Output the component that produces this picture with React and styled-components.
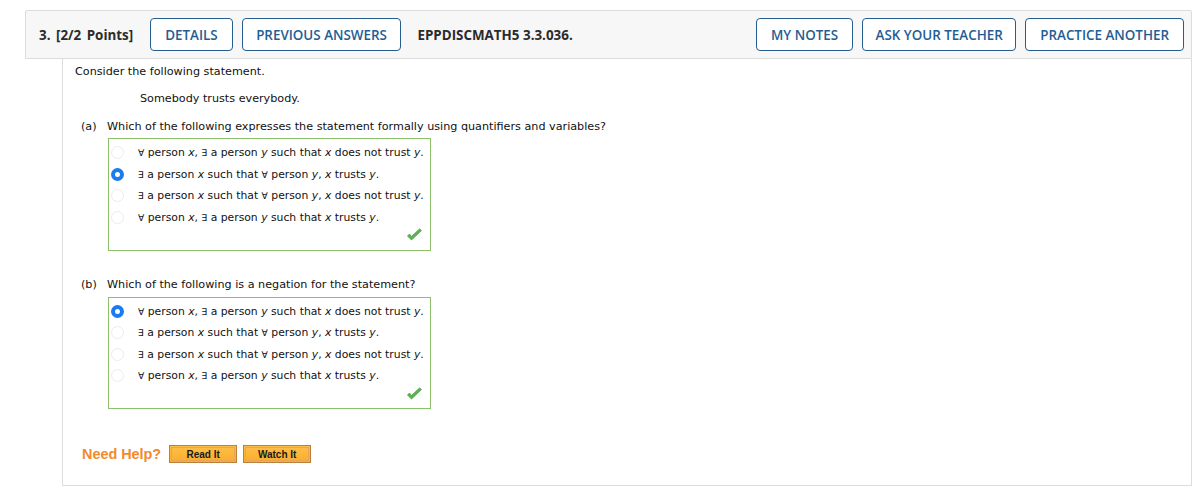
import React from "react"
import styled, { createGlobalStyle } from "styled-components"

const Global = createGlobalStyle`
  html, body {
    margin: 0;
    padding: 0;
    background: #fff;
  }
`

const Page = styled.div`
  padding: 10px 8px 11px 25px;
  width: 1167px;
`

const Header = styled.div`
  display: flex;
  align-items: center;
  height: 47px;
  padding: 0 7px 0 13px;
  background: #f7f7f7;
  border: 1px solid #dcdcdc;
  border-radius: 2px 2px 0 0;
  font-family: "Open Sans", sans-serif;
  font-size: 13.4px;
`

const Title = styled.span`
  font-weight: 700;
  color: #2b2b2b;
  margin-right: 17px;
  word-spacing: 2px;
`

const Code = styled.span`
  font-weight: 700;
  color: #2b2b2b;
  margin-left: 16px;
  flex: 1;
`

const Group = styled.div`
  display: flex;
  gap: 9px;
`

const HeadButton = styled.button`
  height: 33px;
  padding: 0 ${(p) => p.$pad || 14}px;
  border: 1.5px solid #255d8c;
  border-radius: 4px;
  background: #fff;
  color: #1f5e95;
  font-family: "Open Sans", sans-serif;
  font-size: 13.4px;
  font-weight: 600;
  white-space: nowrap;
`

const Body = styled.div`
  margin-left: 37px;
  border: 1px solid #dcdcdc;
  border-top: none;
  padding: 5px 12px 21px 12px;
  font-family: "DejaVu Sans", Verdana, sans-serif;
  font-size: 11.2px;
  color: #111;
  height: 400px;
  box-sizing: content-box;
`

const Line = styled.div`
  line-height: 16px;
  margin-top: ${(p) => p.$top || 0}px;
  padding-left: ${(p) => p.$indent || 0}px;
  display: flex;
`

const Label = styled.span`
  width: 26px;
`

const Choices = styled.div`
  display: inline-flex;
  flex-direction: column;
  align-self: flex-start;
  margin: ${(p) => p.$top || 3}px 0 0 33px;
  border: 1px solid #8cc06b;
  padding: 3px 6px 0 1px;
  font-size: 10.8px;
`

const Row = styled.div`
  display: flex;
  align-items: center;
  height: 21.5px;
  white-space: nowrap;
`

const Sym = styled.span`
  font-size: 0.85em;
`

const Radio = styled.span`
  box-sizing: border-box;
  width: 13px;
  height: 13px;
  border-radius: 50%;
  margin: 0 14px 0 1px;
  flex-shrink: 0;
  ${(p) =>
    p.$on
      ? `background: #fff; border: 4.5px solid #1a7cf0;`
      : `background: #fff; border: 1px solid #ececec;`}
`

const Check = styled.div`
  display: flex;
  justify-content: flex-end;
  align-items: flex-start;
  height: 21.5px;
  padding-right: 1px;
`

const Help = styled.div`
  display: flex;
  align-items: center;
  margin: 36px 0 0 7px;
  gap: 6px;
`

const HelpText = styled.span`
  font-family: "Liberation Sans", Arial, sans-serif;
  font-weight: 700;
  font-size: 14.4px;
  color: #f28a2c;
  margin-right: 2px;
`

const HelpButton = styled.button`
  width: 68px;
  height: 18px;
  padding: 0;
  border: 1px solid #b9803a;
  outline: 1px solid #eaa455;
  outline-offset: -3px;
  background: linear-gradient(#fdbf4a, #fbad2c);
  font-family: "Liberation Sans", Arial, sans-serif;
  font-weight: 700;
  font-size: 10px;
  color: #1a1a1a;
`

const Tick = () => (
  <svg width="17" height="14" viewBox="0 0 17 14">
    <path
      d="M1.5 8 L5.5 12 L15.5 2.5 L13.5 1 L5.5 8.5 L3.5 6 Z"
      fill="#5bb450"
      stroke="#4e9e45"
      strokeWidth="0.8"
      strokeLinejoin="round"
    />
  </svg>
)

const options = [
  (
    <>
      <Sym>∀</Sym> person <i>x</i>, <Sym>∃</Sym> a person <i>y</i> such that <i>x</i> does not trust <i>y</i>.
    </>
  ),
  (
    <>
      <Sym>∃</Sym> a person <i>x</i> such that <Sym>∀</Sym> person <i>y</i>, <i>x</i> trusts <i>y</i>.
    </>
  ),
  (
    <>
      <Sym>∃</Sym> a person <i>x</i> such that <Sym>∀</Sym> person <i>y</i>, <i>x</i> does not trust <i>y</i>.
    </>
  ),
  (
    <>
      <Sym>∀</Sym> person <i>x</i>, <Sym>∃</Sym> a person <i>y</i> such that <i>x</i> trusts <i>y</i>.
    </>
  ),
]

const ChoiceBox = ({ selected, top }) => (
  <Choices $top={top}>
    {options.map((o, i) => (
      <Row key={i}>
        <Radio $on={i === selected} />
        <span>{o}</span>
      </Row>
    ))}
    <Check>
      <Tick />
    </Check>
  </Choices>
)

export default function App() {
  return (
    <>
      <Global />
      <Page>
        <Header>
          <Title>3. [2/2 Points]</Title>
          <Group>
            <HeadButton>DETAILS</HeadButton>
            <HeadButton $pad={13.5}>PREVIOUS ANSWERS</HeadButton>
          </Group>
          <Code>EPPDISCMATH5 3.3.036.</Code>
          <Group>
            <HeadButton>MY NOTES</HeadButton>
            <HeadButton $pad={12.5}>ASK YOUR TEACHER</HeadButton>
            <HeadButton $pad={14}>PRACTICE ANOTHER</HeadButton>
          </Group>
        </Header>
        <Body>
          <Line>Consider the following statement.</Line>
          <Line $top={11} $indent={65}>Somebody trusts everybody.</Line>
          <Line $top={12} $indent={6}>
            <Label>(a)</Label>
            Which of the following expresses the statement formally using quantifiers and variables?
          </Line>
          <ChoiceBox selected={1} top={3} />
          <Line $top={26} $indent={6}>
            <Label>(b)</Label>
            Which of the following is a negation for the statement?
          </Line>
          <ChoiceBox selected={0} top={4} />
          <Help>
            <HelpText>Need Help?</HelpText>
            <HelpButton>Read It</HelpButton>
            <HelpButton>Watch It</HelpButton>
          </Help>
        </Body>
      </Page>
    </>
  )
}
